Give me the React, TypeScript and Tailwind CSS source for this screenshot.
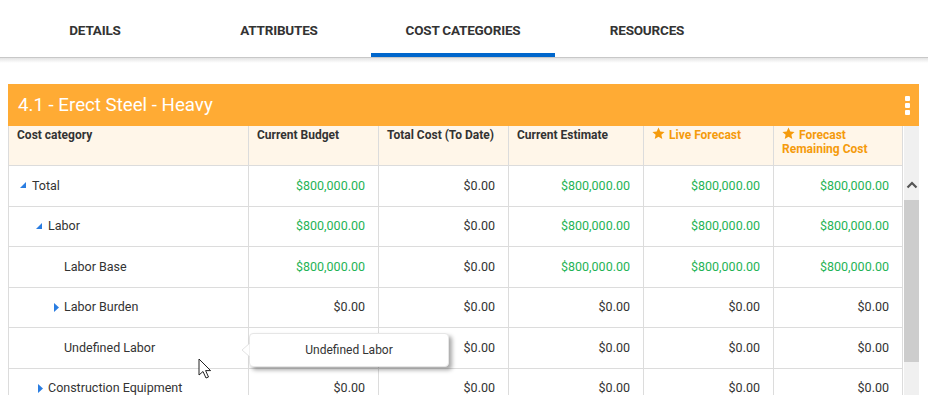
import React from "react";

type Row = {
  label: string;
  level: number;
  toggle?: "open" | "closed";
  values: string[];
};

const GREEN = "$800,000.00";

const rows: Row[] = [
  { label: "Total", level: 0, toggle: "open", values: [GREEN, "$0.00", GREEN, GREEN, GREEN] },
  { label: "Labor", level: 1, toggle: "open", values: [GREEN, "$0.00", GREEN, GREEN, GREEN] },
  { label: "Labor Base", level: 2, values: [GREEN, "$0.00", GREEN, GREEN, GREEN] },
  { label: "Labor Burden", level: 2, toggle: "closed", values: ["$0.00", "$0.00", "$0.00", "$0.00", "$0.00"] },
  { label: "Undefined Labor", level: 2, values: ["$0.00", "$0.00", "$0.00", "$0.00", "$0.00"] },
  { label: "Construction Equipment", level: 1, toggle: "closed", values: ["$0.00", "$0.00", "$0.00", "$0.00", "$0.00"] },
];

const tabs = ["DETAILS", "ATTRIBUTES", "COST CATEGORIES", "RESOURCES"];

const Star = () => (
  <svg width="13" height="13" viewBox="0 0 24 24" className="inline-block mr-[4px] -mt-[4px]">
    <path
      fill="#f59b0c"
      d="M12 1l3.3 7.2 7.9.8-5.9 5.3 1.7 7.8L12 18l-7 4.1 1.7-7.8L.8 9l7.9-.8z"
    />
  </svg>
);

const Toggle = ({ kind }: { kind: "open" | "closed" }) =>
  kind === "open" ? (
    <svg width="6" height="6" viewBox="0 0 6 6" className="absolute left-[8px] top-[-1px]">
      <polygon points="6,0 6,6 0,6" fill="#2a7de1" />
    </svg>
  ) : (
    <svg width="5" height="9" viewBox="0 0 5 9" className="absolute left-[10px] top-[-2px]">
      <polygon points="0,0 5,4.5 0,9" fill="#2a7de1" />
    </svg>
  );

const cols = "grid grid-cols-[241px_130px_130px_135px_130px_129px]";

export default function App() {
  return (
    <div className="w-[928px] h-[395px] overflow-hidden bg-white font-['Roboto',sans-serif] text-[#333]">
      {/* tabs */}
      <div className="flex pl-[3px] h-[57px]">
        {tabs.map((t) => (
          <div
            key={t}
            className={`w-[184px] flex items-center justify-center text-[13.5px] font-bold tracking-[-0.2px] text-[#333] pt-[8px] border-b-4 ${
              t === "COST CATEGORIES" ? "border-[#0066cc]" : "border-transparent"
            }`}
          >
            {t}
          </div>
        ))}
      </div>
      <div className="h-px bg-[#c8c8c8]" />
      <div className="h-[5px] bg-gradient-to-b from-[#e4e4e4] to-white" />

      {/* card */}
      <div className="ml-[8px] mt-[21px] w-[911px]">
        <div className="h-[42px] bg-[#ffab34] flex items-center justify-between pl-[10px] pr-[9px]">
          <span className="text-white text-[18.7px] pt-[1px]">4.1 - Erect Steel - Heavy</span>
          <div className="flex flex-col gap-[2px]">
            <span className="w-[5px] h-[5px] rounded-[1px] bg-white" />
            <span className="w-[5px] h-[5px] rounded-[1px] bg-white" />
            <span className="w-[5px] h-[5px] rounded-[1px] bg-white" />
          </div>
        </div>

        <div className="flex">
          <div className="w-[895px] relative">
            {/* header row */}
            <div className={`${cols} h-[40px] bg-[#fff6e9] text-[12px] font-bold leading-[14px]`}>
              <div className="border-l border-r border-b border-[#dcdcdc] pl-[8px] pt-[2px]">Cost category</div>
              <div className="border-r border-b border-[#dcdcdc] pl-[8px] pt-[2px]">Current Budget</div>
              <div className="border-r border-b border-[#dcdcdc] pl-[8px] pt-[2px]">Total Cost (To Date)</div>
              <div className="border-r border-b border-[#dcdcdc] pl-[8px] pt-[2px]">Current Estimate</div>
              <div className="border-r border-b border-[#dcdcdc] pl-[8px] pt-[2px] text-[#f59b0c]">
                <Star />
                Live Forecast
              </div>
              <div className="border-r border-b border-[#dcdcdc] pl-[8px] pt-[2px] text-[#f59b0c]">
                <Star />
                Forecast
                <br />
                Remaining Cost
              </div>
            </div>

            {/* body rows */}
            {rows.map((r) => (
              <div key={r.label} className={`${cols} h-[40.5px] text-[12.5px]`}>
                <div
                  className="border-l border-r border-b border-[#dcdcdc] flex items-center pt-[1px]"
                  style={{ paddingLeft: 3 + r.level * 16 }}
                >
                  <span className="relative w-[20px] h-[6px] shrink-0">
                    {r.toggle && <Toggle kind={r.toggle} />}
                  </span>
                  <span>{r.label}</span>
                </div>
                {r.values.map((v, i) => (
                  <div
                    key={i}
                    className={`border-r border-b border-[#dcdcdc] flex items-center justify-end pr-[13px] pt-[1px] ${
                      v === GREEN ? "text-[#1fb356]" : "text-[#333]"
                    }`}
                  >
                    {v}
                  </div>
                ))}
              </div>
            ))}

            {/* tooltip */}
            <div className="absolute left-[233px] top-[207px] flex items-center">
              <svg width="9" height="14" viewBox="0 0 9 14" className="-mr-px z-10">
                <polygon points="9,0 1,7 9,14" fill="white" stroke="#e2e2e2" />
              </svg>
              <div className="w-[200px] h-[34px] bg-white rounded-[4px] border border-[#e6e6e6] shadow-[3px_3px_4px_rgba(0,0,0,0.35)] flex items-center justify-center text-[12px] text-[#333]">
                Undefined Labor
              </div>
            </div>

            {/* mouse cursor */}
            <svg width="14" height="22" viewBox="0 0 14 22" className="absolute left-[190px] top-[232px]">
              <path
                d="M1 1 L1 17 L5 13.5 L8 20 L10.5 19 L7.6 12.6 L12.6 12.6 Z"
                fill="white"
                stroke="#222"
                strokeWidth="1"
                strokeLinejoin="round"
              />
            </svg>
          </div>

          {/* scrollbar */}
          <div className="w-[20px] ml-[1px] bg-[#f0f0f0] flex flex-col items-center pt-[55px]">
            <svg width="12" height="8" viewBox="0 0 12 8">
              <polyline points="1.5,6.5 6,2 10.5,6.5" fill="none" stroke="#555" strokeWidth="2.2" />
            </svg>
            <div className="mt-[11px] w-[15px] h-[162px] bg-[#cdcdcd]" />
            <div className="h-[40px]" />
          </div>
        </div>
      </div>
    </div>
  );
}
